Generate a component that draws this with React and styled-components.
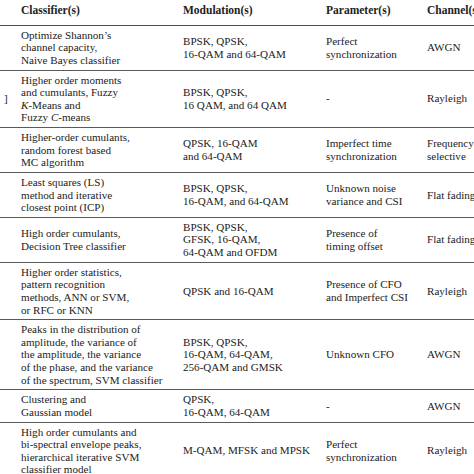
import React from "react";
import styled, { createGlobalStyle } from "styled-components";

const GlobalStyle = createGlobalStyle`
  html, body {
    margin: 0;
    padding: 0;
    background: #ffffff;
    overflow: hidden;
  }
  #root {
    width: 474px;
    height: 474px;
    overflow: hidden;
  }
`;

const Frame = styled.div`
  width: 474px;
  height: 474px;
  overflow: hidden;
`;

const Table = styled.table`
  border-collapse: collapse;
  table-layout: fixed;
  width: 540px;
  font-family: "Liberation Serif", "DejaVu Serif", serif;
  font-size: 11.1px;
  line-height: 12.62px;
  color: #222222;
`;

const Col = styled.col`
  width: ${({ $w }) => $w}px;
`;

const HeadCell = styled.th`
  text-align: left;
  font-weight: bold;
  font-size: 11.5px;
  padding: 4px 0 8px 5px;
  border-bottom: 1.5px solid #4a4a4a;
  vertical-align: middle;
  white-space: nowrap;
`;

const Row = styled.tr`
  border-bottom: 1.5px solid #5a5a5a;
`;

const Cell = styled.td`
  padding: 3px 0 3px 5px;
  vertical-align: middle;
  white-space: nowrap;
  overflow: hidden;
`;

const RefCell = styled.td`
  padding: 0 0 0 4px;
  text-align: left;
  vertical-align: middle;
`;

const rows = [
  {
    ref: "",
    classifier: ["Optimize Shannon’s", "channel capacity,", "Naive Bayes classifier"],
    modulation: ["BPSK, QPSK,", "16-QAM and 64-QAM"],
    parameter: ["Perfect", "synchronization"],
    channel: ["AWGN"],
  },
  {
    ref: "]",
    classifier: [
      "Higher order moments",
      "and cumulants, Fuzzy",
      <>
        <i>K</i>-Means and
      </>,
      <>
        Fuzzy <i>C</i>-means
      </>,
    ],
    modulation: ["BPSK, QPSK,", "16 QAM, and 64 QAM"],
    parameter: ["-"],
    channel: ["Rayleigh"],
  },
  {
    ref: "",
    classifier: ["Higher-order cumulants,", "random forest based", "MC algorithm"],
    modulation: ["QPSK, 16-QAM", "and 64-QAM"],
    parameter: ["Imperfect time", "synchronization"],
    channel: ["Frequency", "selective"],
  },
  {
    ref: "",
    classifier: ["Least squares (LS)", "method and iterative", "closest point (ICP)"],
    modulation: ["BPSK, QPSK,", "16-QAM, and 64-QAM"],
    parameter: ["Unknown noise", "variance and CSI"],
    channel: ["Flat fading"],
  },
  {
    ref: "",
    classifier: ["High order cumulants,", "Decision Tree classifier"],
    modulation: ["BPSK, QPSK,", "GFSK, 16-QAM,", "64-QAM and OFDM"],
    parameter: ["Presence of", "timing offset"],
    channel: ["Flat fading"],
  },
  {
    ref: "",
    classifier: [
      "Higher order statistics,",
      "pattern recognition",
      "methods, ANN or SVM,",
      "or RFC or KNN",
    ],
    modulation: ["QPSK and 16-QAM"],
    parameter: ["Presence of CFO", "and Imperfect CSI"],
    channel: ["Rayleigh"],
  },
  {
    ref: "",
    classifier: [
      "Peaks in the distribution of",
      "amplitude, the variance of",
      "the amplitude, the variance",
      "of the phase, and the variance",
      "of the spectrum, SVM classifier",
    ],
    modulation: ["BPSK, QPSK,", "16-QAM, 64-QAM,", "256-QAM and GMSK"],
    parameter: ["Unknown CFO"],
    channel: ["AWGN"],
  },
  {
    ref: "",
    classifier: ["Clustering and", "Gaussian model"],
    modulation: ["QPSK,", "16-QAM, 64-QAM"],
    parameter: ["-"],
    channel: ["AWGN"],
  },
  {
    ref: "",
    classifier: [
      "High order cumulants and",
      "bi-spectral envelope peaks,",
      "hierarchical iterative SVM",
      "classifier model",
    ],
    modulation: ["M-QAM, MFSK and MPSK"],
    parameter: ["Perfect", "synchronization"],
    channel: ["Rayleigh"],
  },
];

function Lines({ items }) {
  return items.map((line, i) => (
    <React.Fragment key={i}>
      {i > 0 && <br />}
      {line}
    </React.Fragment>
  ));
}

export default function App() {
  return (
    <>
      <GlobalStyle />
      <Frame>
        <Table>
          <colgroup>
            <Col $w={16} />
            <Col $w={162} />
            <Col $w={143} />
            <Col $w={101} />
            <Col $w={118} />
          </colgroup>
          <thead>
            <tr>
              <HeadCell />
              <HeadCell>Classifier(s)</HeadCell>
              <HeadCell>Modulation(s)</HeadCell>
              <HeadCell>Parameter(s)</HeadCell>
              <HeadCell>Channel(s)</HeadCell>
            </tr>
          </thead>
          <tbody>
            {rows.map((r, i) => (
              <Row key={i}>
                <RefCell>{r.ref}</RefCell>
                <Cell>
                  <Lines items={r.classifier} />
                </Cell>
                <Cell>
                  <Lines items={r.modulation} />
                </Cell>
                <Cell>
                  <Lines items={r.parameter} />
                </Cell>
                <Cell>
                  <Lines items={r.channel} />
                </Cell>
              </Row>
            ))}
          </tbody>
        </Table>
      </Frame>
    </>
  );
}
